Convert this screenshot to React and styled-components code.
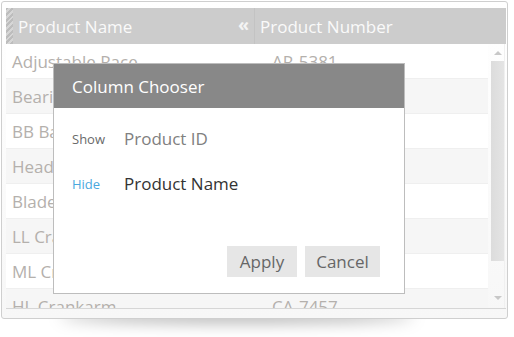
import React from 'react';
import styled, { createGlobalStyle } from 'styled-components';

const Global = createGlobalStyle`
  html, body { margin: 0; padding: 0; background: #fff; }
  body { font-family: "Open Sans", "Noto Sans", sans-serif; }
`;

const rows = [
  ['Adjustable Race', 'AR-5381'],
  ['Bearing Ball', 'BA-8327'],
  ['BB Ball Bearing', 'BE-2349'],
  ['Headset Ball Bearings', 'BE-2908'],
  ['Blade', 'BL-2036'],
  ['LL Crankarm', 'CA-5965'],
  ['ML Crankarm', 'CA-6738'],
  ['HL Crankarm', 'CA-7457'],
];

function App() {
  return (
    <>
      <Global />
      <Stage>
        <Frame>
          <Header>
            <Hatch />
            <HeadCell $w={242}>
              Product Name
              <Collapse>«</Collapse>
            </HeadCell>
            <HeadCell>Product Number</HeadCell>
          </Header>
          <Body>
            <Rows>
              {rows.map((r, i) => (
                <Row key={r[0]} $alt={i % 2 === 1}>
                  <Cell $w={254}>{r[0]}</Cell>
                  <Cell>{r[1]}</Cell>
                </Row>
              ))}
            </Rows>
            <Scrollbar>
              <Arrow $up />
              <Thumb />
              <Arrow />
            </Scrollbar>
          </Body>
          <Dialog>
            <DialogTitle>Column Chooser</DialogTitle>
            <DialogBody>
              <Option>
                <Toggle>Show</Toggle>
                <OptionLabel>Product ID</OptionLabel>
              </Option>
              <Option>
                <Toggle $active>Hide</Toggle>
                <OptionLabel $active>Product Name</OptionLabel>
              </Option>
            </DialogBody>
            <Buttons>
              <Button $w={70}>Apply</Button>
              <Button $w={75}>Cancel</Button>
            </Buttons>
          </Dialog>
        </Frame>
        <Shadow />
      </Stage>
    </>
  );
}

const Stage = styled.div`
  width: 514px;
  height: 337px;
  padding: 1px 0 0 1px;
  box-sizing: border-box;
  position: relative;
  overflow: hidden;
`;

const Frame = styled.div`
  position: relative;
  z-index: 1;
  width: 507px;
  height: 318px;
  box-sizing: border-box;
  border: 1px solid #cfcfcf;
  border-radius: 3px;
  background: linear-gradient(#ffffff, #f7f7f7);
  padding: 6px 0 0 4px;
`;

const Header = styled.div`
  display: flex;
  height: 36px;
  width: 500px;
  background: #cccccc;
`;

const Hatch = styled.div`
  width: 7px;
  background: repeating-linear-gradient(
    135deg,
    #bdbdbd 0 2px,
    #d6d6d6 2px 4px
  );
`;

const HeadCell = styled.div`
  position: relative;
  width: ${p => (p.$w ? `${p.$w}px` : 'auto')};
  flex: ${p => (p.$w ? 'none' : '1')};
  display: flex;
  align-items: center;
  padding-left: 5px;
  box-sizing: border-box;
  color: #fafafa;
  font-size: 17px;
  border-right: ${p => (p.$w ? '1px solid #c3c3c3' : 'none')};
`;

const Collapse = styled.span`
  position: absolute;
  right: 5px;
  top: 4px;
  font-size: 18px;
  font-weight: 700;
  color: #f4f4f4;
`;

const Body = styled.div`
  display: flex;
  width: 500px;
  height: 264px;
  border-bottom: 1px solid #d6d6d6;
  overflow: hidden;
`;

const Rows = styled.div`
  width: 482px;
  display: flex;
  flex-direction: column;
`;

const Row = styled.div`
  display: flex;
  flex: none;
  height: 35px;
  box-sizing: border-box;
  border-bottom: 1px solid #efefef;
  background: ${p => (p.$alt ? '#f6f6f6' : '#ffffff')};
`;

const Cell = styled.div`
  width: ${p => (p.$w ? `${p.$w}px` : 'auto')};
  flex: ${p => (p.$w ? 'none' : '1')};
  padding-left: 6px;
  display: flex;
  align-items: center;
  font-size: 17px;
  color: #b4b0ac;
  white-space: nowrap;
  overflow: hidden;
`;

const Scrollbar = styled.div`
  width: 13px;
  margin-left: 3px;
  display: flex;
  flex-direction: column;
  align-items: center;
  border-right: 1px solid #f0f0f0;
`;

const Arrow = styled.div`
  width: 0;
  height: 0;
  margin: ${p => (p.$up ? '7px 0 6px' : 'auto 0 8px')};
  border-left: 4px solid transparent;
  border-right: 4px solid transparent;
  ${p => (p.$up ? 'border-bottom: 4px solid #c8c8c8;' : 'border-top: 4px solid #c8c8c8;')}
`;

const Thumb = styled.div`
  width: 13px;
  height: 200px;
  background: linear-gradient(90deg, #dcdcdc, #e4e4e4);
`;

const Dialog = styled.div`
  position: absolute;
  left: 51px;
  top: 61px;
  width: 352px;
  height: 231px;
  box-sizing: border-box;
  border: 1px solid #bdbdbd;
  background: #fff;
  display: flex;
  flex-direction: column;
`;

const DialogTitle = styled.div`
  height: 44px;
  background: #888888;
  color: #ffffff;
  font-size: 17px;
  display: flex;
  align-items: center;
  padding-left: 18px;
`;

const DialogBody = styled.div`
  padding: 15px 0 0 18px;
  display: flex;
  flex-direction: column;
  gap: 14px;
`;

const Option = styled.div`
  display: flex;
  align-items: center;
  height: 31px;
`;

const Toggle = styled.span`
  width: 52px;
  font-size: 13px;
  color: ${p => (p.$active ? '#4aa8de' : '#6a6a6a')};
`;

const OptionLabel = styled.span`
  font-size: 17px;
  color: ${p => (p.$active ? '#333333' : '#808080')};
`;

const Buttons = styled.div`
  margin-top: auto;
  margin-bottom: 16px;
  display: flex;
  justify-content: flex-end;
  gap: 8px;
  padding-right: 24px;
`;

const Button = styled.div`
  width: ${p => p.$w}px;
  height: 31px;
  background: #e6e6e6;
  color: #666666;
  font-size: 17px;
  display: flex;
  align-items: center;
  justify-content: center;
`;

const Shadow = styled.div`
  position: absolute;
  left: 60px;
  right: 100px;
  top: 310px;
  height: 12px;
  border-radius: 50%;
  background: rgba(0, 0, 0, 0.35);
  filter: blur(8px);
`;

export default App;
